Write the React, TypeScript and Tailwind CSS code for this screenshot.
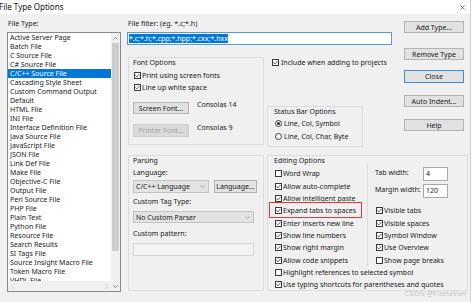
import React from "react";

const ITEMS = [
  "Active Server Page",
  "Batch File",
  "C Source File",
  "C# Source File",
  "C/C++ Source File",
  "Cascading Style Sheet",
  "Custom Command Output",
  "Default",
  "HTML File",
  "INI File",
  "Interface Definition File",
  "Java Source File",
  "JavaScript File",
  "JSON File",
  "Link Def File",
  "Make File",
  "Objective-C File",
  "Output File",
  "Perl Source File",
  "PHP File",
  "Plain Text",
  "Python File",
  "Resource File",
  "Search Results",
  "SI Tags File",
  "Source Insight Macro File",
  "Token Macro File",
  "VHDL File",
];

function Check({ checked }: { checked: boolean }) {
  return (
    <span className="w-[7px] h-[7px] border border-[#3a3a3a] bg-white flex items-center justify-center shrink-0">
      {checked && (
        <svg width="5" height="5" viewBox="0 0 5 5">
          <path d="M0.4 2.5 L1.8 3.9 L4.6 0.9" fill="none" stroke="#2a2a2a" strokeWidth="0.8" />
        </svg>
      )}
    </span>
  );
}

function Radio({ checked }: { checked: boolean }) {
  return (
    <span className="w-[7px] h-[7px] rounded-full border border-[#3a3a3a] bg-white flex items-center justify-center shrink-0">
      {checked && <span className="w-[3px] h-[3px] rounded-full bg-[#1a1a1a]" />}
    </span>
  );
}

function CheckRow({ checked, label, h = "h-[12.33px]" }: { checked: boolean; label: string; h?: string }) {
  return (
    <div className={`flex items-center gap-[1px] pl-[1px] whitespace-nowrap ${h}`}>
      <Check checked={checked} />
      <span className="leading-[9px]">{label}</span>
    </div>
  );
}

function Btn({ label, h = "h-[12px]", w = "w-full", focused = false, disabled = false }: { label: string; h?: string; w?: string; focused?: boolean; disabled?: boolean }) {
  return (
    <div
      className={`${h} ${w} flex items-center justify-center border whitespace-nowrap leading-[9px] ${
        disabled
          ? "bg-[#dadada] border-[#cfcfcf] text-[#a3a3a3]"
          : focused
          ? "bg-[#e1e1e1] border-[#3f8fd8] text-[#1a1a1a]"
          : "bg-[#e1e1e1] border-[#b4b4b4] text-[#1a1a1a]"
      }`}
    >
      {label}
    </div>
  );
}

function Chevron() {
  return (
    <svg width="5" height="3" viewBox="0 0 5 3">
      <path d="M0.3 0.3 L2.5 2.6 L4.7 0.3" fill="none" stroke="#9a9a9a" strokeWidth="0.7" />
    </svg>
  );
}

function SelectBox({ label, h, w }: { label: string; h: string; w: string }) {
  return (
    <div className={`${h} ${w} flex items-center justify-between bg-[#e3e3e3] border border-[#c4c4c4] pl-[2px] pr-[3px]`}>
      <span className="leading-[9px] whitespace-nowrap">{label}</span>
      <Chevron />
    </div>
  );
}

export default function App() {
  return (
    <div className="w-[474px] h-[302px] flex bg-white overflow-hidden font-['Noto_Sans','Open_Sans',sans-serif] text-[7px] leading-[9px] text-[#1a1a1a]">
      <div className="relative w-[471px] h-full flex flex-col bg-[#f0f0f0] border-r border-[#cfcfcf] shrink-0">
        {/* Title bar */}
        <div className="h-[14px] bg-white flex items-center justify-between shrink-0">
          <span className="-ml-[1px] text-[8px] leading-[10px] text-[#111] whitespace-nowrap">File Type Options</span>
          <svg className="mr-[5px]" width="5" height="5" viewBox="0 0 5 5">
            <path d="M0.3 0.3 L4.7 4.7 M4.7 0.3 L0.3 4.7" stroke="#444" strokeWidth="0.7" />
          </svg>
        </div>

        {/* Body */}
        <div className="flex pt-[5px] pl-[7px]">
          {/* Left column: file types */}
          <div className="w-[114px] flex flex-col">
            <div className="h-[10px] leading-[10px] pl-[1px]">File Type:</div>
            <div className="mt-[3px] h-[260px] border border-[#8a8a8a] bg-white flex flex-col">
              <div className="flex flex-1 min-h-0">
                <div className="flex-1 overflow-hidden">
                  {ITEMS.map((it) => (
                    <div
                      key={it}
                      className={`h-[9px] leading-[9px] pl-[2px] whitespace-nowrap ${
                        it === "C/C++ Source File" ? "bg-[#0078d7] text-white" : ""
                      }`}
                    >
                      {it}
                    </div>
                  ))}
                </div>
                <div className="w-[9px] flex flex-col bg-[#f0f0f0]">
                  <div className="h-[10px] flex items-center justify-center">
                    <svg width="5" height="3" viewBox="0 0 5 3">
                      <path d="M0.3 2.7 L2.5 0.4 L4.7 2.7" fill="none" stroke="#666" strokeWidth="0.7" />
                    </svg>
                  </div>
                  <div className="h-[208px] mx-[1px] bg-[#cdcdcd]" />
                  <div className="flex-1" />
                </div>
              </div>
              <div className="h-[10px] flex bg-[#f0f0f0]">
                <div className="flex-1 flex items-center justify-between px-[3px]">
                  <svg width="3" height="5" viewBox="0 0 3 5">
                    <path d="M2.7 0.3 L0.4 2.5 L2.7 4.7" fill="none" stroke="#c8c8c8" strokeWidth="0.7" />
                  </svg>
                  <svg width="3" height="5" viewBox="0 0 3 5">
                    <path d="M0.3 0.3 L2.6 2.5 L0.3 4.7" fill="none" stroke="#c8c8c8" strokeWidth="0.7" />
                  </svg>
                </div>
                <div className="w-[9px] flex items-center justify-center">
                  <svg width="5" height="3" viewBox="0 0 5 3">
                    <path d="M0.3 0.3 L2.5 2.6 L4.7 0.3" fill="none" stroke="#555" strokeWidth="0.7" />
                  </svg>
                </div>
              </div>
            </div>
          </div>

          {/* Right region */}
          <div className="ml-[6px] w-[341px] flex flex-col">
            <div className="h-[136px] flex">
              <div className="w-[265px] flex flex-col">
                <div className="h-[10px] leading-[10px] pl-[1px] whitespace-nowrap">File filter: (eg. *.c;*.h)</div>
                <div className="mt-[3px] h-[13px] border border-[#5a9ad6] bg-white flex items-center pl-[1px]">
                  <span className="bg-[#0078d7] text-white leading-[9px] whitespace-nowrap">*.c;*.h;*.cpp;*.hpp;*.cxx;*.hxx</span>
                </div>
                <div className="mt-[12px] flex">
                  {/* Font Options */}
                  <div className="ml-[1px] w-[136px] h-[88px] border border-[#dcdcdc] pl-[4px] flex flex-col">
                    <div className="leading-[9px]">Font Options</div>
                    <div className="mt-[2px]">
                      <CheckRow checked label="Print using screen fonts" h="h-[12px]" />
                      <CheckRow checked label="Line up white space" h="h-[12px]" />
                    </div>
                    <div className="mt-[9px] flex items-start">
                      <Btn label="Screen Font..." w="w-[56px]" h="h-[12px]" />
                      <span className="ml-[8px] -mt-[2px] leading-[10px] whitespace-nowrap">Consolas 14</span>
                    </div>
                    <div className="mt-[10px] flex items-start">
                      <Btn label="Printer Font..." w="w-[56px]" h="h-[13px]" disabled />
                      <span className="ml-[8px] -mt-[1px] leading-[10px] whitespace-nowrap">Consolas 9</span>
                    </div>
                  </div>
                  <div className="ml-[3px] flex flex-col">
                    <div className="h-[10px] pl-[5px] flex items-center gap-[2px] whitespace-nowrap">
                      <Check checked />
                      <span className="leading-[9px]">Include when adding to projects</span>
                    </div>
                    <div className="mt-[39px] w-[96px] h-[41px] border border-[#dcdcdc] pl-[6px] flex flex-col">
                      <div className="leading-[10px] whitespace-nowrap">Status Bar Options</div>
                      <div className="h-[13px] flex items-center gap-[2px] pl-[1px] whitespace-nowrap">
                        <Radio checked />
                        <span className="leading-[9px]">Line, Col, Symbol</span>
                      </div>
                      <div className="h-[13px] flex items-center gap-[2px] pl-[1px] whitespace-nowrap">
                        <Radio checked={false} />
                        <span className="leading-[9px]">Line, Col, Char, Byte</span>
                      </div>
                    </div>
                  </div>
                </div>
              </div>

              {/* Buttons */}
              <div className="ml-[12px] w-[60px] flex flex-col pt-[2px]">
                <Btn label="Add Type..." h="h-[12px]" />
                <div className="mt-[15px]">
                  <Btn label="Remove Type" h="h-[12px]" />
                </div>
                <div className="mt-[10px]">
                  <Btn label="Close" h="h-[13px]" focused />
                </div>
                <div className="mt-[12px]">
                  <Btn label="Auto Indent..." h="h-[12px]" />
                </div>
                <div className="mt-[12px]">
                  <Btn label="Help" h="h-[12px]" />
                </div>
              </div>
            </div>

            {/* Bottom groups */}
            <div className="flex">
              {/* Parsing */}
              <div className="ml-[1px] w-[136px] h-[136px] border border-[#dcdcdc] pl-[4px] flex flex-col">
                <div className="leading-[9px]">Parsing</div>
                <div className="mt-[3px] leading-[9px]">Language:</div>
                <div className="mt-[3px] flex">
                  <SelectBox label="C/C++ Language" h="h-[13px]" w="w-[76px]" />
                  <div className="ml-[5px]">
                    <Btn label="Language..." w="w-[43px]" h="h-[13px]" />
                  </div>
                </div>
                <div className="mt-[4px] leading-[10px] whitespace-nowrap">Custom Tag Type:</div>
                <div className="mt-[4px]">
                  <SelectBox label="No Custom Parser" h="h-[12px]" w="w-[121px]" />
                </div>
                <div className="mt-[6px] leading-[10px] whitespace-nowrap">Custom pattern:</div>
                <div className="mt-[4px] h-[13px] w-[121px] border border-[#d6d6d6] bg-[#f2f2f2]" />
              </div>

              {/* Editing Options */}
              <div className="ml-[3px] w-[201px] h-[136px] border border-[#dcdcdc] pl-[6px] flex flex-col">
                <div className="leading-[9px]">Editing Options</div>
                <div className="mt-[2.8px] flex">
                  <div className="w-[93px] flex flex-col">
                    <CheckRow checked={false} label="Word Wrap" />
                    <CheckRow checked label="Allow auto-complete" />
                    <CheckRow checked label="Allow intelligent paste" />
                    <div className="relative">
                      <CheckRow checked label="Expand tabs to spaces" />
                      <div className="absolute left-[-5px] top-[-3px] w-[93px] h-[16px] border-[1.5px] border-[#e0353b]" />
                    </div>
                    <CheckRow checked label="Enter inserts new line" />
                    <CheckRow checked label="Show line numbers" />
                    <CheckRow checked label="Show right margin" />
                    <CheckRow checked label="Allow code snippets" />
                  </div>
                  <div className="w-px bg-[#dcdcdc] -mt-[4px]" />
                  <div className="ml-[7px] flex flex-col">
                    <div className="h-[37px] flex flex-col">
                      <div className="flex items-start">
                        <span className="w-[48px] leading-[10px] whitespace-nowrap">Tab width:</span>
                        <div className="-mt-[1px] w-[25px] h-[14px] border border-[#a8a8a8] bg-white pl-[2px] flex items-center leading-[9px]">4</div>
                      </div>
                      <div className="mt-[3px] flex items-start">
                        <span className="mt-[1px] w-[48px] leading-[10px] whitespace-nowrap">Margin width:</span>
                        <div className="w-[25px] h-[14px] border border-[#a8a8a8] bg-white pl-[2px] flex items-center leading-[9px]">120</div>
                      </div>
                    </div>
                    <CheckRow checked label="Visible tabs" />
                    <CheckRow checked label="Visible spaces" />
                    <CheckRow checked label="Symbol Window" />
                    <CheckRow checked label="Use Overview" />
                    <CheckRow checked={false} label="Show page breaks" />
                  </div>
                </div>
                <CheckRow checked={false} label="Highlight references to selected symbol" />
                <CheckRow checked label="Use typing shortcuts for parentheses and quotes" />
              </div>
            </div>
          </div>
        </div>

        {/* Watermark */}
        <div className="absolute right-[4px] bottom-[4px] text-[7.5px] leading-[10px] text-[#c6c6c6] whitespace-nowrap">
          CSDN @FionaVan
        </div>
      </div>
      <div className="flex-1 bg-white" />
    </div>
  );
}
